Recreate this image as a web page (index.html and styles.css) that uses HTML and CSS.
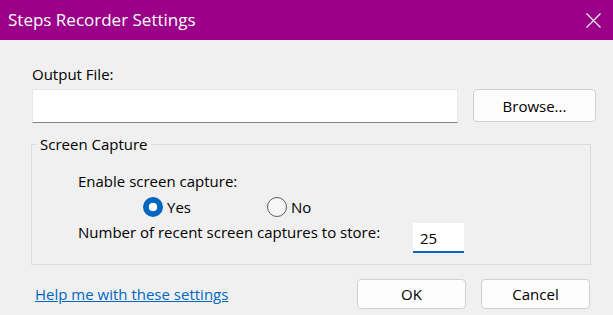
FILE: index.html
```html
<!DOCTYPE html>
<html lang="en">
<head>
<meta charset="utf-8">
<title>Steps Recorder Settings</title>
<link rel="stylesheet" href="styles.css">
</head>
<body>
<div class="window">
  <header class="titlebar">
    <span class="title">Steps Recorder Settings</span>
    <span class="close" aria-label="Close">
      <svg width="15" height="15" viewBox="0 0 15 15"><path d="M0.5 0.5 L14.5 14.5 M14.5 0.5 L0.5 14.5" stroke="#fff" stroke-width="1.1" fill="none"/></svg>
    </span>
  </header>
  <main class="content">
    <div class="field-label">Output File:</div>
    <div class="file-row">
      <div class="text-input"></div>
      <div class="btn browse">Browse...</div>
    </div>
    <fieldset class="group">
      <legend class="legend">Screen Capture</legend>
      <div class="group-body">
        <div class="line">Enable screen capture:</div>
        <div class="radios">
          <div class="radio yes"><span class="dot checked"></span><span>Yes</span></div>
          <div class="radio"><span class="dot"></span><span>No</span></div>
        </div>
        <div class="count-row">
          <span class="count-label">Number of recent screen captures to store:</span>
          <div class="num">25</div>
        </div>
      </div>
    </fieldset>
    <footer class="actions">
      <a class="help" href="#">Help me with these settings</a>
      <div class="buttons">
        <div class="btn action">OK</div>
        <div class="btn action">Cancel</div>
      </div>
    </footer>
  </main>
</div>
</body>
</html>
```
FILE: styles.css
```css
* { box-sizing: border-box; }
html, body { margin: 0; padding: 0; }
body {
  width: 613px;
  height: 315px;
  overflow: hidden;
  background: #f0f0f0;
  font-family: "Open Sans", "Noto Sans", sans-serif;
  font-size: 15px;
  line-height: 20px;
  color: #000;
}
.titlebar {
  height: 40px;
  background: #9b0089;
  color: #fff;
  display: flex;
  align-items: center;
  justify-content: space-between;
  padding: 0 12px 0 8px;
}
.title { font-size: 17px; line-height: 22px; }
.close { display: flex; width: 15px; height: 15px; }
.content {
  padding: 24px 0 0 32px;
}
.field-label { height: 20px; }
.file-row {
  display: flex;
  gap: 15px;
  margin-top: 5px;
  align-items: flex-start;
}
.text-input {
  width: 426px;
  height: 34px;
  background: #fff;
  border: 1px solid #e8e8e8;
  border-bottom: 1px solid #858585;
}
.btn {
  background: #fdfdfd;
  border: 1px solid #d0d0d0;
  border-radius: 4px;
  display: flex;
  align-items: center;
  justify-content: center;
}
.browse { width: 123px; height: 33px; }
.group {
  margin: 11px 0 0 -1px;
  width: 560px;
  padding: 0;
  border: 1px solid #dcdcdc;
}
.legend {
  margin-left: 5px;
  padding: 0 3px;
  line-height: 20px;
}
.group-body {
  padding: 17px 0 11px 46px;
}
.line { height: 20px; }
.radios {
  display: flex;
  margin: 6px 0 0 65px;
  height: 20px;
}
.radio { display: flex; align-items: center; gap: 4px; }
.radio.yes { width: 124px; }
.dot {
  width: 20px;
  height: 20px;
  border-radius: 50%;
  border: 1px solid #5a5a5a;
  background: #f6f6f6;
}
.dot.checked {
  border: none;
  background: radial-gradient(circle, #fff 0 4px, #0067c0 4.6px);
}
.count-row {
  display: flex;
  align-items: flex-start;
  margin-top: 5px;
}
.count-label { width: 335px; }
.num {
  width: 51px;
  height: 30px;
  margin-top: 1px;
  background: #fff;
  border-bottom: 2px solid #0067c0;
  padding: 5px 0 0 7px;
}
.actions {
  display: flex;
  align-items: center;
  justify-content: space-between;
  width: 558px;
  margin-top: 14px;
  padding-left: 3px;
}
.help { color: #0067c0; text-decoration: underline; }
.buttons { display: flex; gap: 15px; }
.action { width: 109px; height: 30px; }
```
